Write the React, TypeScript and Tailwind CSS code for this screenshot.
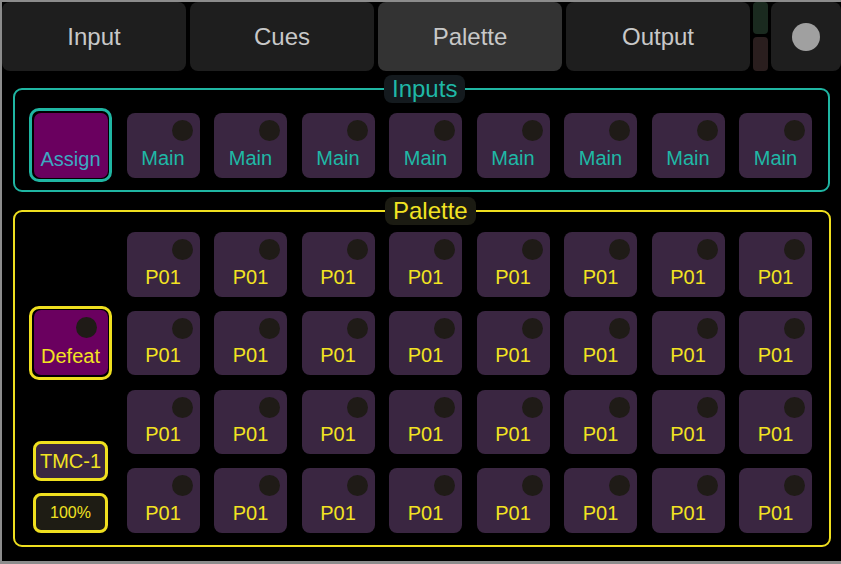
import React from 'react';

const tabs = ['Input', 'Cues', 'Palette', 'Output'];
const activeTab = 'Palette';

function Dot({ className = '' }: { className?: string }) {
    return <div className={`h-[21px] w-[21px] shrink-0 self-end rounded-full bg-[#1f1b17] ${className}`} />;
}

function PadButton({ label, color }: { label: string; color: string }) {
    return (
        <div className="flex h-[64.5px] w-[73px] flex-col items-center rounded-[8px] bg-[#3a2641]">
            <Dot className="mr-[7px] mt-[7px]" />
            <span className={`mt-auto pb-[10px] text-[20px] leading-none ${color}`}>{label}</span>
        </div>
    );
}

export default function App() {
    const pads = Array.from({ length: 32 }, (_, i) => i);

    return (
        <div
            className="flex h-[564px] w-[841px] flex-col overflow-hidden border-b-[3px] border-l-2 border-t-2 border-[#8c8c8c] bg-black"
            style={{ fontFamily: '"Liberation Sans", Arial, sans-serif' }}
        >
            {/* top tab bar */}
            <div className="flex h-[69px] shrink-0">
                <div className="flex gap-[4px]">
                    {tabs.map((t) => (
                        <div
                            key={t}
                            className={`flex w-[184px] items-center justify-center rounded-[8px] text-[24px] text-[#c8c8c8] ${
                                t === activeTab ? 'bg-[#333333]' : 'bg-[#1e1e1e]'
                            }`}
                        >
                            {t}
                        </div>
                    ))}
                </div>
                <div className="ml-[3px] flex w-[15px] flex-col gap-[3px]">
                    <div className="h-[32px] rounded-[4px] bg-[#1a2a1f]" />
                    <div className="flex-1 rounded-[4px] bg-[#2a1e1e]" />
                </div>
                <div className="ml-[3px] flex flex-1 items-center justify-center rounded-[8px] bg-[#1e1e1e]">
                    <div className="h-[28px] w-[28px] rounded-full bg-[#a0a0a0]" />
                </div>
            </div>

            {/* Inputs */}
            <div className="relative ml-[11px] mt-[17px] h-[104px] w-[817px] rounded-[9px] border-2 border-[#1fb5a2] pl-[14px] pt-[18px]">
                <div className="absolute left-[369px] top-[-15px] h-[28px] rounded-[8px] bg-[#141a1e] px-[8px] text-[24px] leading-[28px] text-[#1fb8a6]">
                    Inputs
                </div>
                <div className="flex items-center gap-[14.5px]">
                    <div className="h-[74px] w-[83px] rounded-[10px] border-[3px] border-[#1fb5a2] p-[1.5px]">
                        <div className="flex h-full flex-col items-center rounded-[7px] bg-[#6a005f]">
                            <span className="mt-auto pb-[9px] text-[20px] leading-none text-[#3ca8c2]">Assign</span>
                        </div>
                    </div>
                    {Array.from({ length: 8 }, (_, i) => (
                        <div key={i} className="flex h-[65px] w-[73px] flex-col items-center rounded-[8px] bg-[#3a2641]">
                            <Dot className="mr-[7px] mt-[7px]" />
                            <span className="mt-auto pb-[10px] text-[20px] leading-none text-[#1fb8a6]">Main</span>
                        </div>
                    ))}
                </div>
            </div>

            {/* Palette */}
            <div className="relative ml-[11px] mt-[18px] h-[337px] w-[818px] rounded-[9px] border-2 border-[#efdf1f] pl-[14px] pt-[20px]">
                <div className="absolute left-[370px] top-[-15px] h-[28px] rounded-[8px] bg-[#1b1b12] px-[8px] text-[24px] leading-[28px] text-[#f2e322]">
                    Palette
                </div>
                <div className="flex gap-[14.5px]">
                    <div className="flex w-[83px] flex-col items-center">
                        <div className="mt-[73.5px] h-[74px] w-[83px] rounded-[10px] border-[3px] border-[#efdf1f] p-[1.5px]">
                            <div className="flex h-full flex-col items-center rounded-[7px] bg-[#6a005f]">
                                <Dot className="mr-[11px] mt-[7px]" />
                                <span className="mt-auto pb-[9px] text-[20px] leading-none text-[#f2e322]">Defeat</span>
                            </div>
                        </div>
                        <div className="mt-auto flex h-[40px] w-[75px] items-center justify-center rounded-[8px] border-[3px] border-[#efdf1f] bg-[#3a2641] text-[20px] text-[#f2e322]">
                            TMC-1
                        </div>
                        <div className="mt-[12px] flex h-[40px] w-[75px] items-center justify-center rounded-[8px] border-[3px] border-[#efdf1f] bg-[#1e1c14] text-[16px] text-[#f2e322]">
                            100%
                        </div>
                    </div>
                    <div className="grid grid-cols-[repeat(8,73px)] gap-x-[14.5px] gap-y-[14.3px]">
                        {pads.map((i) => (
                            <PadButton key={i} label="P01" color="text-[#f2e322]" />
                        ))}
                    </div>
                </div>
            </div>
        </div>
    );
}
